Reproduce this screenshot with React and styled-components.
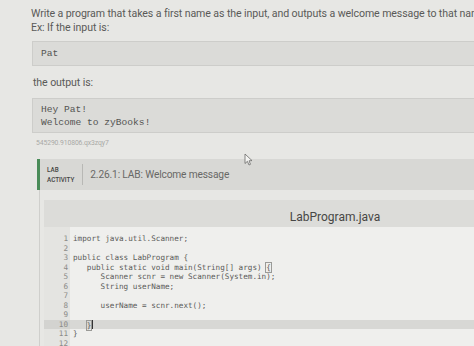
import React from 'react';
import styled, { createGlobalStyle } from 'styled-components';

const GlobalStyle = createGlobalStyle`
    html, body {
        margin: 0;
        padding: 0;
        background: #e7e7e4;
        overflow: hidden;
    }
    body {
        width: 474px;
        height: 346px;
        font-family: Roboto, "Liberation Sans", sans-serif;
    }
`;

const Page = styled.div`
    position: relative;
    width: 474px;
    height: 346px;
    overflow: hidden;
    padding: 7px 0 0 31px;
    box-sizing: border-box;
`;

const Prose = styled.p`
    margin: 0 0 ${(p) => p.$gap || 0}px;
    padding-left: ${(p) => p.$indent || 0}px;
    font-size: 10.6px;
    line-height: 14px;
    letter-spacing: -0.1px;
    color: #5a5a58;
    white-space: nowrap;
`;

const SampleBox = styled.pre`
    margin: 0 0 ${(p) => p.$gap || 0}px 1px;
    width: 600px;
    padding: ${(p) => p.$pad || '5px 8px'};
    box-sizing: border-box;
    background: #dbdbd8;
    border: 1px solid #cdcdca;
    font-family: "Liberation Mono", monospace;
    font-size: 9.6px;
    line-height: 13px;
    color: #545452;
`;

const ActivityId = styled.div`
    margin: 2px 0 11px 5px;
    font-size: 6.8px;
    line-height: 9px;
    color: #a9a9a6;
    letter-spacing: -0.1px;
`;

const LabBar = styled.div`
    display: flex;
    align-items: center;
    width: 600px;
    height: 31px;
    margin-left: 6px;
    background: #d8d8d5;
    border-left: 3px solid #4a8c58;
    box-sizing: border-box;
`;

const LabTag = styled.div`
    padding: 0 8px 0 7px;
    font-size: 6.3px;
    line-height: 10px;
    font-weight: 500;
    color: #454543;
    text-transform: uppercase;
`;

const Divider = styled.div`
    width: 1px;
    height: 21px;
    background: #b8b8b5;
`;

const LabTitle = styled.div`
    padding-left: 7px;
    font-size: 10.2px;
    color: #686866;
    letter-spacing: -0.15px;
`;

const Panel = styled.div`
    margin: 0 0 0 8px;
    width: 620px;
    border-left: 1px solid #cfcfcc;
    padding: 10px 0 0 4px;
`;

const FileHeader = styled.div`
    width: 582px;
    height: 27px;
    padding-top: 6px;
    box-sizing: border-box;
    display: flex;
    align-items: center;
    justify-content: center;
    background: #dcdcd9;
    font-size: 12px;
    color: #474745;
`;

const Editor = styled.div`
    display: grid;
    grid-template-columns: 26px 1fr;
    grid-auto-rows: 9.55px;
    padding-top: 7px;
    background: linear-gradient(to right, #e4e4e1 26px, #efefed 26px);
    font-family: "DejaVu Sans Mono", monospace;
    font-size: 7.65px;
    line-height: 9.55px;
`;

const Line = styled.div`
    display: contents;
`;

const LineNo = styled.span`
    text-align: right;
    padding-right: 2px;
    color: #8b8b88;
    background: ${(p) => (p.$active ? '#d3d3d0' : 'transparent')};
`;

const Code = styled.span`
    padding-left: 3px;
    white-space: pre;
    color: #5b5b59;
    background: ${(p) => (p.$active ? '#d8d8d5' : 'transparent')};
`;

const Bracket = styled.span`
    outline: 0.5px solid #9a9a97;
`;

const Caret = styled.span`
    display: inline-block;
    width: 1px;
    height: 9px;
    margin-left: 1px;
    vertical-align: -1px;
    background: #333;
`;

const Pointer = styled.svg`
    position: absolute;
    left: 244px;
    top: 153px;
`;

const code = [
    'import java.util.Scanner;',
    '',
    'public class LabProgram {',
    '   public static void main(String[] args) ',
    '      Scanner scnr = new Scanner(System.in);',
    '      String userName;',
    '',
    '      userName = scnr.next();',
    '',
    '   ',
    '}',
    '',
];

export default function App() {
    return (
        <>
            <GlobalStyle />
            <Page>
                <Prose>
                    Write a program that takes a first name as the input, and outputs a welcome message to that name.
                </Prose>
                <Prose $gap={6}>Ex: If the input is:</Prose>
                <SampleBox $gap={10}>Pat</SampleBox>
                <Prose $indent={2} $gap={8}>the output is:</Prose>
                <SampleBox $gap={6} $pad="4px 8px 3px">{'Hey Pat!\nWelcome to zyBooks!'}</SampleBox>
                <ActivityId>545290.910806.qx3zqy7</ActivityId>
                <LabBar>
                    <LabTag>
                        Lab
                        <br />
                        Activity
                    </LabTag>
                    <Divider />
                    <LabTitle>2.26.1: LAB: Welcome message</LabTitle>
                </LabBar>
                <Panel>
                    <FileHeader>LabProgram.java</FileHeader>
                    <Editor>
                        {code.map((text, i) => {
                            const active = i === 9;
                            return (
                                <Line key={i}>
                                    <LineNo $active={active}>{i + 1}</LineNo>
                                    <Code $active={active}>
                                        {text}
                                        {i === 3 && <Bracket>{'{'}</Bracket>}
                                        {active && (
                                            <>
                                                <Bracket>{'}'}</Bracket>
                                                <Caret />
                                            </>
                                        )}
                                    </Code>
                                </Line>
                            );
                        })}
                    </Editor>
                </Panel>
                <Pointer width="9" height="13" viewBox="0 0 9 13">
                    <path d="M1 1 L1 10.5 L3.4 8.3 L5 12 L6.5 11.3 L5 7.8 L8 7.6 Z" fill="#f4f4f2" stroke="#6a6a68" strokeWidth="0.8" />
                </Pointer>
            </Page>
        </>
    );
}
